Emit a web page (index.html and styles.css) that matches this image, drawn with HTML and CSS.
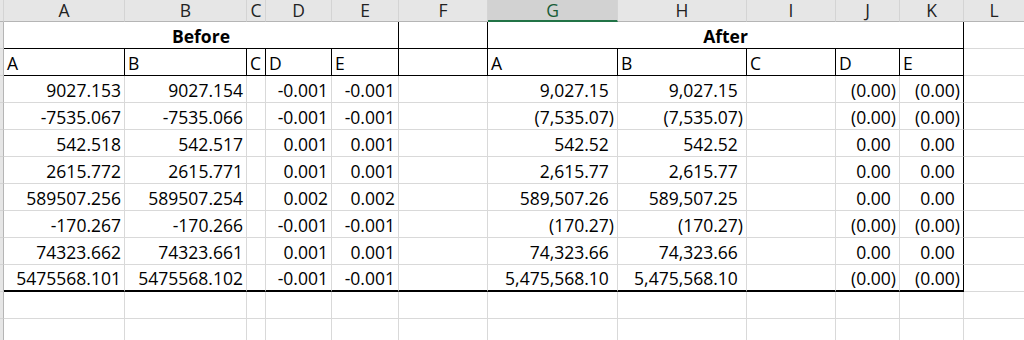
FILE: index.html
```html
<!DOCTYPE html>
<html lang="en">
<head>
    <meta charset="UTF-8">
    <title>Before / After</title>
    <link rel="stylesheet" href="styles.css">
</head>
<body>
    <table class="sheet">
        <colgroup>
            <col class="c-rh"><col class="c-a"><col class="c-b"><col class="c-c"><col class="c-d"><col class="c-e">
            <col class="c-f"><col class="c-g"><col class="c-h"><col class="c-i"><col class="c-j"><col class="c-k"><col class="c-l">
        </colgroup>
        <tr class="head">
            <th class="rh"></th>
            <th>A</th><th>B</th><th>C</th><th>D</th><th>E</th><th>F</th>
            <th class="sel">G</th><th>H</th><th>I</th><th>J</th><th>K</th><th>L</th>
        </tr>
        <tr>
            <td class="rh"></td>
            <td colspan="5" class="title bb br">Before</td>
            <td class="bb br"></td>
            <td colspan="5" class="title bb br">After</td>
            <td></td>
        </tr>
        <tr>
            <td class="rh"></td>
            <td class="lbl bb br">A</td><td class="lbl bb br">B</td><td class="lbl bb br">C</td><td class="lbl bb br">D</td><td class="lbl bb br">E</td>
            <td class="bb br"></td>
            <td class="lbl bb br">A</td><td class="lbl bb br">B</td><td class="lbl bb br">C</td><td class="lbl bb br">D</td><td class="lbl bb br">E</td>
            <td></td>
        </tr>
        <tr>
            <td class="rh"></td>
            <td class="num">9027.153</td><td class="num">9027.154</td><td></td><td class="num">-0.001</td><td class="num">-0.001</td><td></td>
            <td class="num pos">9,027.15</td><td class="num pos">9,027.15</td><td></td><td class="num">(0.00)</td><td class="num br">(0.00)</td><td></td>
        </tr>
        <tr>
            <td class="rh"></td>
            <td class="num">-7535.067</td><td class="num">-7535.066</td><td></td><td class="num">-0.001</td><td class="num">-0.001</td><td></td>
            <td class="num">(7,535.07)</td><td class="num">(7,535.07)</td><td></td><td class="num">(0.00)</td><td class="num br">(0.00)</td><td></td>
        </tr>
        <tr>
            <td class="rh"></td>
            <td class="num">542.518</td><td class="num">542.517</td><td></td><td class="num">0.001</td><td class="num">0.001</td><td></td>
            <td class="num pos">542.52</td><td class="num pos">542.52</td><td></td><td class="num pos">0.00</td><td class="num pos br">0.00</td><td></td>
        </tr>
        <tr>
            <td class="rh"></td>
            <td class="num">2615.772</td><td class="num">2615.771</td><td></td><td class="num">0.001</td><td class="num">0.001</td><td></td>
            <td class="num pos">2,615.77</td><td class="num pos">2,615.77</td><td></td><td class="num pos">0.00</td><td class="num pos br">0.00</td><td></td>
        </tr>
        <tr>
            <td class="rh"></td>
            <td class="num">589507.256</td><td class="num">589507.254</td><td></td><td class="num">0.002</td><td class="num">0.002</td><td></td>
            <td class="num pos">589,507.26</td><td class="num pos">589,507.25</td><td></td><td class="num pos">0.00</td><td class="num pos br">0.00</td><td></td>
        </tr>
        <tr>
            <td class="rh"></td>
            <td class="num">-170.267</td><td class="num">-170.266</td><td></td><td class="num">-0.001</td><td class="num">-0.001</td><td></td>
            <td class="num">(170.27)</td><td class="num">(170.27)</td><td></td><td class="num">(0.00)</td><td class="num br">(0.00)</td><td></td>
        </tr>
        <tr>
            <td class="rh"></td>
            <td class="num">74323.662</td><td class="num">74323.661</td><td></td><td class="num">0.001</td><td class="num">0.001</td><td></td>
            <td class="num pos">74,323.66</td><td class="num pos">74,323.66</td><td></td><td class="num pos">0.00</td><td class="num pos br">0.00</td><td></td>
        </tr>
        <tr class="last">
            <td class="rh"></td>
            <td class="num">5475568.101</td><td class="num">5475568.102</td><td></td><td class="num">-0.001</td><td class="num">-0.001</td><td></td>
            <td class="num pos">5,475,568.10</td><td class="num pos">5,475,568.10</td><td></td><td class="num">(0.00)</td><td class="num br">(0.00)</td><td class="plain"></td>
        </tr>
        <tr>
            <td class="rh"></td>
            <td></td><td></td><td></td><td></td><td></td><td></td><td></td><td></td><td></td><td></td><td></td><td></td>
        </tr>
        <tr>
            <td class="rh"></td>
            <td></td><td></td><td></td><td></td><td></td><td></td><td></td><td></td><td></td><td></td><td></td><td></td>
        </tr>
    </table>
</body>
</html>
```

FILE: styles.css
```css
body {
    margin: 0;
    background: #fff;
    font-family: "Open Sans", "Liberation Sans", sans-serif;
    color: #000;
    overflow: hidden;
}
.sheet {
    border-collapse: separate;
    border-spacing: 0;
    table-layout: fixed;
    width: 1024px;
    font-size: 17.5px;
}
.c-rh { width: 4px; }
.c-a { width: 121px; }
.c-b { width: 122px; }
.c-c { width: 19px; }
.c-d { width: 66px; }
.c-e { width: 67px; }
.c-f { width: 89px; }
.c-g { width: 130px; }
.c-h { width: 129px; }
.c-i { width: 89px; }
.c-j { width: 64px; }
.c-k { width: 64px; }
.c-l { width: 61px; }

tr {
    height: 27px;
}
td, th {
    box-sizing: border-box;
    padding: 0 3px 1px;
    border-right: 1px solid #d9d9d9;
    border-bottom: 1px solid #d9d9d9;
    line-height: 22px;
    vertical-align: bottom;
    white-space: nowrap;
    overflow: hidden;
}

/* column letters */
.head {
    height: 21px;
}
.head th {
    background: #e6e6e6;
    font-weight: normal;
    color: #222;
    line-height: 20px;
    vertical-align: top;
    text-align: center;
    padding: 0;
    overflow: visible;
    border-right: 1px solid #d4d4d4;
    border-bottom: 1px solid #b5b5b5;
}
.head th.sel {
    background: #d2d2d2;
    color: #185c37;
    border-bottom: 2px solid #217346;
}
.rh {
    background: #e6e6e6;
    padding: 0;
    border-right: 1px solid #b5b5b5;
    border-bottom: 1px solid #d4d4d4;
}

.title {
    text-align: center;
    font-weight: bold;
}
.lbl {
    text-align: left;
}
.num {
    text-align: right;
}
/* accounting format keeps room for the closing bracket */
.pos::after {
    content: ")";
    visibility: hidden;
}

.bb {
    border-bottom-color: #000;
}
.br {
    border-right-color: #000;
}
.last td {
    border-bottom: 2px solid #000;
}
.last td.rh,
.last td.plain {
    border-bottom: 1px solid #d9d9d9;
}
.last td.rh {
    border-bottom-color: #d4d4d4;
}
```
